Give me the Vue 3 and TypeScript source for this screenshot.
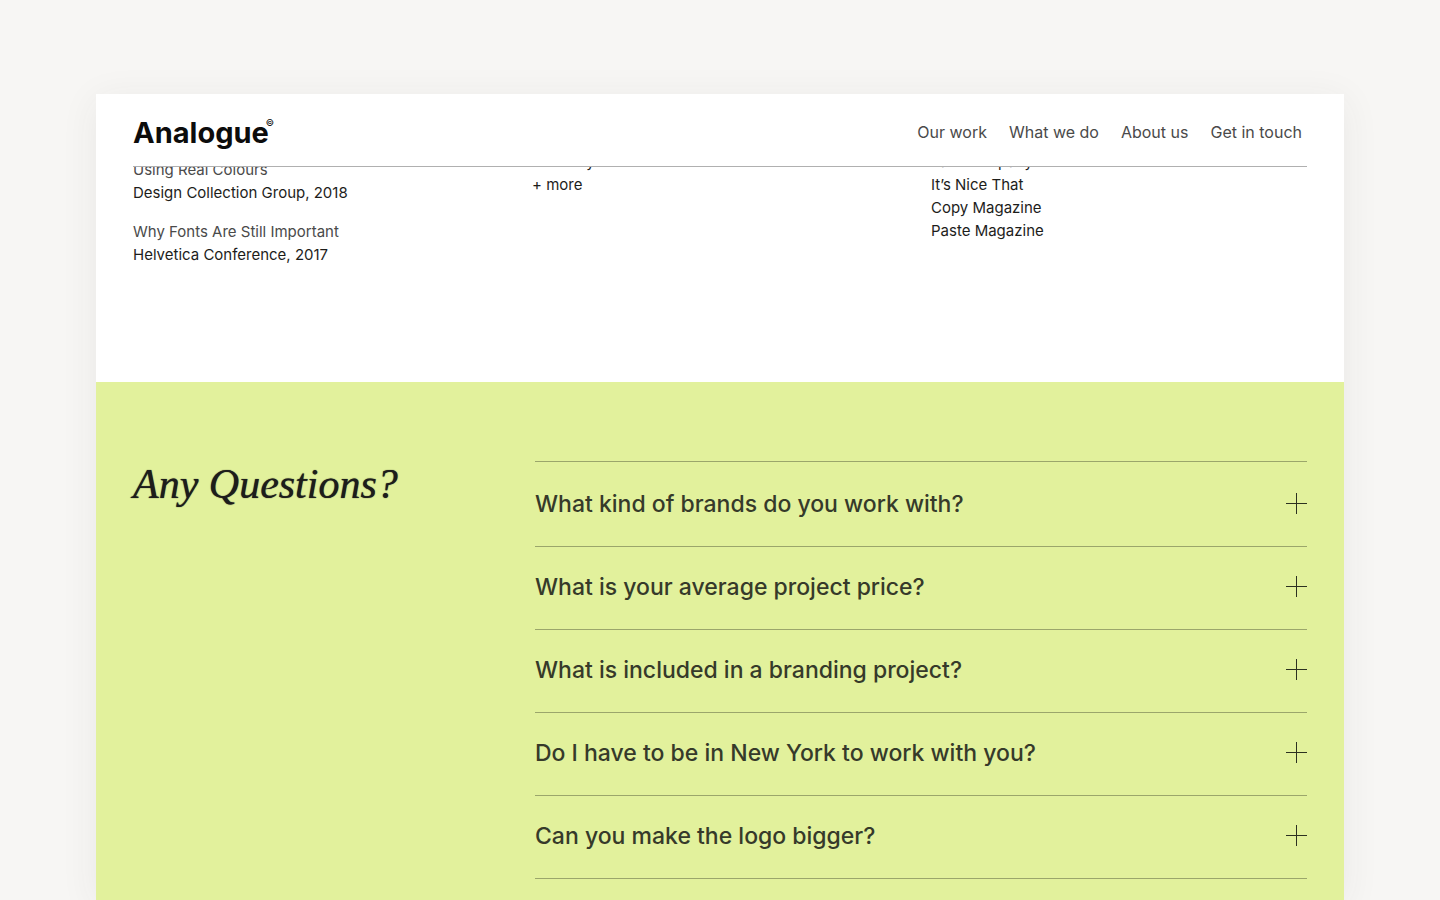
<script setup lang="ts">
import { ref } from 'vue'

interface Talk {
  title: string
  venue: string
}

const navLinks: string[] = ['Our work', 'What we do', 'About us', 'Get in touch']

const talks: Talk[] = [
  { title: 'Using Real Colours', venue: 'Design Collection Group, 2018' },
  { title: 'Why Fonts Are Still Important', venue: 'Helvetica Conference, 2017' },
]
const clients: string[] = ['Burberry', '+ more']
const press: string[] = ['Fast Company', 'It’s Nice That', 'Copy Magazine', 'Paste Magazine']

const questions: string[] = [
  'What kind of brands do you work with?',
  'What is your average project price?',
  'What is included in a branding project?',
  'Do I have to be in New York to work with you?',
  'Can you make the logo bigger?',
]

const selected = ref<number | null>(null)

function toggle(index: number): void {
  selected.value = selected.value === index ? null : index
}
</script>

<template>
  <div class="page">
    <div class="sheet">
      <header class="header">
        <a class="logo" href="#">Analogue<sup class="mark">©</sup></a>
        <nav class="nav">
          <a v-for="link in navLinks" :key="link" class="nav-link" href="#">{{ link }}</a>
        </nav>
      </header>

      <section class="credits">
        <div class="columns">
          <ul class="list talks">
            <li v-for="talk in talks" :key="talk.title">
              <div class="talk-title">{{ talk.title }}</div>
              <div>{{ talk.venue }}</div>
            </li>
          </ul>
          <ul class="list">
            <li v-for="client in clients" :key="client">{{ client }}</li>
          </ul>
          <ul class="list">
            <li v-for="name in press" :key="name">{{ name }}</li>
          </ul>
        </div>
      </section>

      <section class="faq">
        <h2 class="faq-title">Any Questions?</h2>
        <div class="questions">
          <button
            v-for="(question, index) in questions"
            :key="question"
            class="question"
            type="button"
            :aria-pressed="selected === index"
            @click="toggle(index)"
          >
            <span>{{ question }}</span>
            <svg class="plus" viewBox="0 0 21 23" aria-hidden="true">
              <path d="M0 10.5H21M10.5 0V21" />
            </svg>
          </button>
        </div>
      </section>
    </div>
  </div>
</template>

<style>
body {
  background: #f7f6f4;
}
</style>

<style scoped>
.page {
  box-sizing: border-box;
  display: flex;
  min-height: 100vh;
  padding: 94px 96px 0;
  overflow: hidden;
  font-family: Inter, 'Liberation Sans', sans-serif;
  color: #1d1d1b;
}

.sheet {
  display: flex;
  flex: 1;
  flex-direction: column;
  background: #fff;
  box-shadow: 0 6px 36px rgba(60, 60, 60, 0.07);
}

.header {
  display: flex;
  align-items: center;
  justify-content: space-between;
  height: 72px;
  margin: 0 37px;
  border-bottom: 1px solid #b0b0b0;
}

.logo {
  display: flex;
  padding-top: 6px;
  font-size: 29px;
  font-weight: 700;
  line-height: 36px;
  color: #0c0c0c;
  text-decoration: none;
}

.mark {
  margin-left: -3px;
  font-size: 9px;
  font-weight: 500;
  line-height: 16px;
}

.nav {
  display: flex;
  gap: 22px;
  padding: 4px 5px 0 0;
}

.nav-link {
  font-size: 16px;
  line-height: 24px;
  color: #4a4a4a;
  text-decoration: none;
}

.credits {
  padding: 0 37px 116px;
  overflow: hidden;
}

.columns {
  display: grid;
  grid-template-columns: 1fr 1fr 1fr;
  column-gap: 23px;
  margin-top: -17px;
  font-size: 15px;
  line-height: 23px;
}

.list {
  margin: 0;
  padding: 0;
  list-style: none;
}

.talks {
  display: flex;
  flex-direction: column;
  gap: 16px;
  padding-top: 8px;
}

.talk-title {
  color: #4a4a4a;
}

.faq {
  display: grid;
  flex: 1;
  grid-template-columns: 1fr 2fr;
  column-gap: 16px;
  align-items: start;
  padding: 79px 37px 20px;
  background: #e2f19c;
}

.faq-title {
  margin: 0;
  font-family: 'Liberation Serif', serif;
  font-size: 42px;
  font-style: italic;
  font-weight: 400;
  line-height: 46px;
  text-shadow: 0 0 1px currentColor;
  white-space: nowrap;
}

.questions {
  padding-top: 2px;
  border-top: 1px solid #9ba66b;
}

.question {
  display: flex;
  align-items: center;
  justify-content: space-between;
  width: 100%;
  height: 83px;
  padding: 0 0 2px;
  font-family: inherit;
  font-size: 23px;
  font-weight: 500;
  color: #363a2a;
  text-align: left;
  background: none;
  border: 0;
  border-bottom: 1px solid #9ba66b;
  cursor: pointer;
}

.plus {
  flex: none;
  width: 21px;
  height: 23px;
  fill: none;
  stroke: #2c3120;
  stroke-width: 1;
}
</style>
